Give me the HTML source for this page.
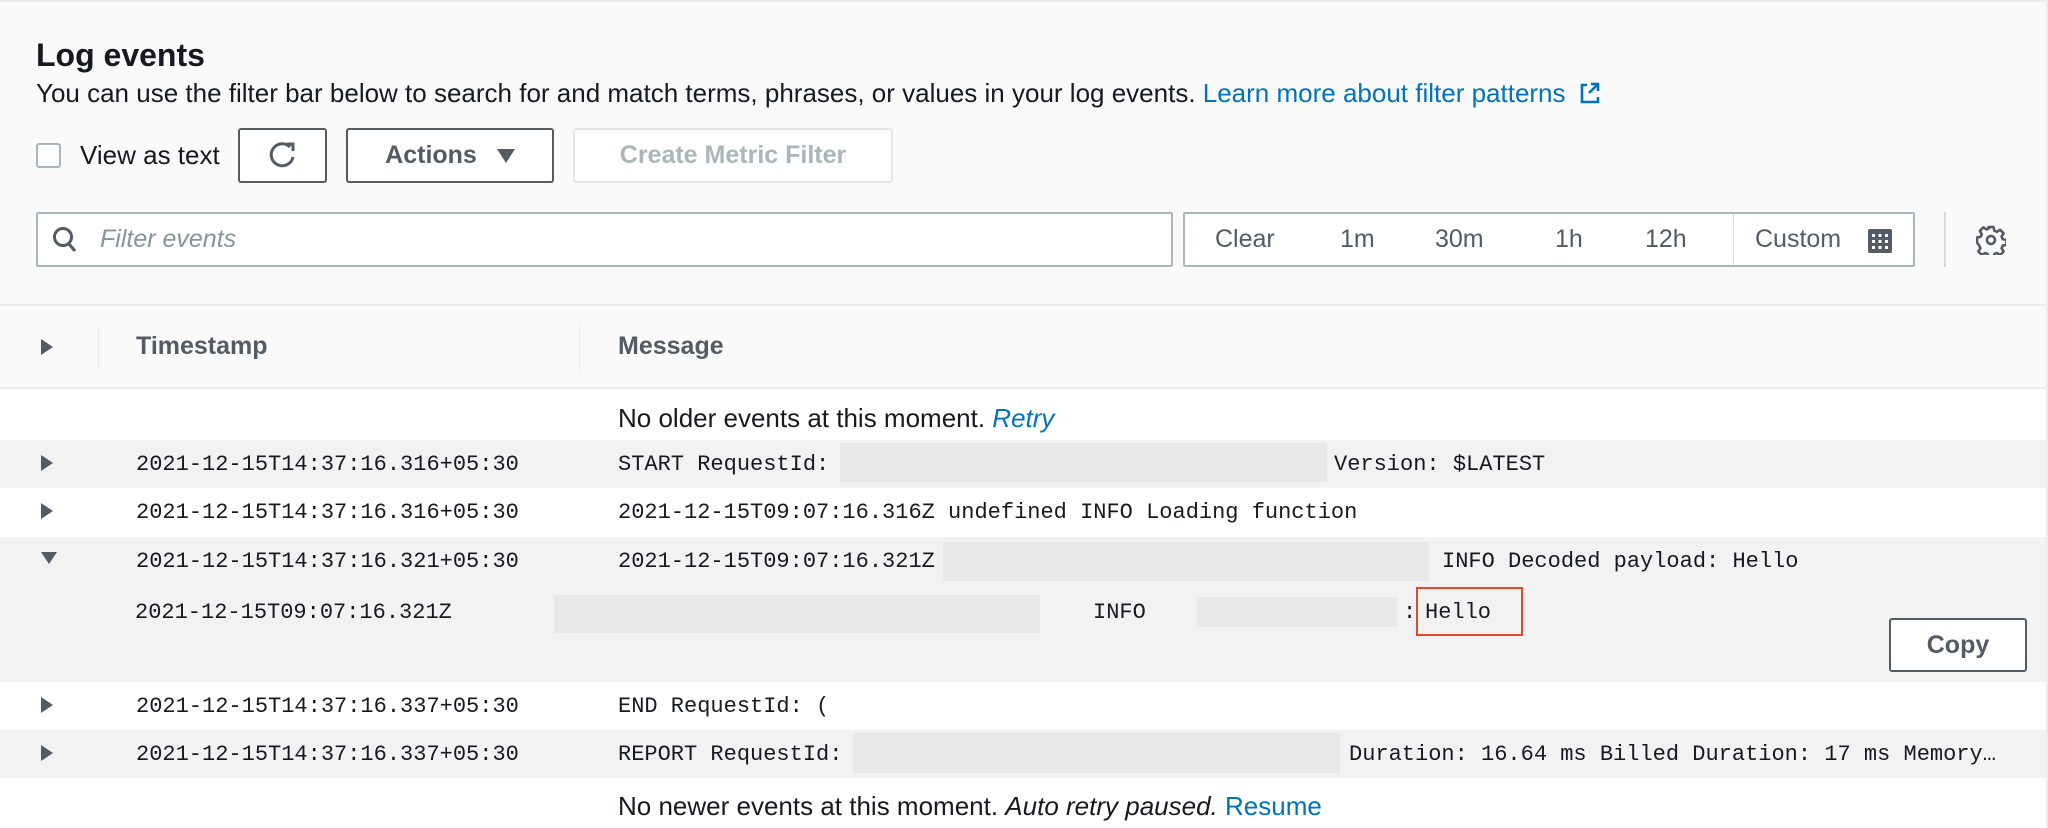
<!DOCTYPE html>
<html><head><meta charset="utf-8"><style>
*{margin:0;padding:0;box-sizing:border-box}
body{width:2048px;height:828px;overflow:hidden;background:#fff;font-family:"Liberation Sans",sans-serif;color:#16191f;position:relative}
.a{position:absolute;white-space:nowrap}
.top{position:absolute;left:0;top:0;width:2048px;height:305px;background:#fafafa;border-top:2px solid #eaeded;border-right:2px solid #eaeded}
.hdr{position:absolute;left:0;top:304px;width:2048px;height:85px;background:#fafafa;border-top:2px solid #eaeded;border-bottom:2px solid #eaeded;border-right:2px solid #eaeded}
.btn{position:absolute;border:2px solid #545b64;border-radius:3px;background:#fff;font-weight:bold;font-size:25px;color:#545b64;display:flex;align-items:center;justify-content:center}
.mono{font-family:"Liberation Mono",monospace;font-size:22px;color:#16191f}
.row{position:absolute;left:0;width:2046px;height:48px}
.sh{background:#f2f2f2}
.red{position:absolute;background:#e8e8e8}
.tri{position:absolute;left:41px;width:0;height:0;border-top:8px solid transparent;border-bottom:8px solid transparent;border-left:12px solid #545b64}
.tg{position:absolute;top:0;height:100%;display:flex;align-items:center;font-size:25px;color:#545b64}
</style></head><body>
<div class="top"></div>
<div class="a" style="left:36px;top:37px;font-size:32px;font-weight:bold">Log events</div>
<div class="a" style="left:36px;top:78px;font-size:26px">You can use the filter bar below to search for and match terms, phrases, or values in your log events. <span style="color:#0073bb">Learn more about filter patterns</span>
<svg width="22" height="24" viewBox="0 0 22 24" style="vertical-align:-3px;margin-left:6px"><path d="M8 4H3v17h16v-5M12 3h7v7M19 3l-9 9" fill="none" stroke="#0073bb" stroke-width="2.6"/></svg></div>
<div class="a" style="left:36px;top:143px;width:25px;height:25px;border:2px solid #aab7b8;border-radius:3px;background:#fff"></div>
<div class="a" style="left:80px;top:140px;font-size:26px">View as text</div>
<div class="btn" style="left:238px;top:128px;width:89px;height:55px"><svg width="30" height="32" viewBox="0 0 30 32"><path d="M22 7A11 11 0 1 0 25 17" fill="none" stroke="#545b64" stroke-width="3"/><path d="M19 4h6v7" fill="none" stroke="#545b64" stroke-width="3"/></svg></div>
<div class="btn" style="left:346px;top:128px;width:208px;height:55px">Actions<span style="display:inline-block;margin-left:20px;border-left:9px solid transparent;border-right:9px solid transparent;border-top:14px solid #545b64"></span></div>
<div class="btn" style="left:573px;top:128px;width:320px;height:55px;border-color:#e4e7e7;color:#aab7b8">Create Metric Filter</div>
<div class="a" style="left:36px;top:212px;width:1137px;height:55px;border:2px solid #aab7b8;border-radius:2px;background:#fff"></div>
<svg class="a" style="left:52px;top:226px" width="26" height="28" viewBox="0 0 26 28"><circle cx="11" cy="11" r="8.5" fill="none" stroke="#545b64" stroke-width="3"/><path d="M17 18l6 7" stroke="#545b64" stroke-width="3.2"/></svg>
<div class="a" style="left:100px;top:225px;font-size:25px;font-style:italic;color:#879596">Filter events</div>
<div class="a" style="left:1183px;top:212px;width:732px;height:55px;border:2px solid #aab7b8;border-radius:2px;background:#fff">
<div class="tg" style="left:30px">Clear</div>
<div class="tg" style="left:155px">1m</div>
<div class="tg" style="left:250px">30m</div>
<div class="tg" style="left:370px">1h</div>
<div class="tg" style="left:460px">12h</div>
<div style="position:absolute;left:548px;top:0;height:100%;border-left:1px solid #d5dbdb"></div>
<div class="tg" style="left:570px">Custom</div>
<svg style="position:absolute;left:683px;top:15px" width="24" height="24" viewBox="0 0 24 24"><rect x="0" y="0" width="24" height="24" rx="2" fill="#545b64"/><g fill="#fff"><rect x="4" y="5" width="3" height="3"/><rect x="10.5" y="5" width="3" height="3"/><rect x="17" y="5" width="3" height="3"/><rect x="4" y="11" width="3" height="3"/><rect x="10.5" y="11" width="3" height="3"/><rect x="17" y="11" width="3" height="3"/><rect x="4" y="17" width="3" height="3"/><rect x="10.5" y="17" width="3" height="3"/><rect x="17" y="17" width="3" height="3"/></g></svg>
</div>
<div class="a" style="left:1944px;top:212px;height:55px;border-left:2px solid #d5dbdb"></div>
<svg class="a" style="left:1976px;top:225px" width="30" height="30" viewBox="0 0 30 30"><path d="M12.5 2h5l.8 3.7 2.6 1.1 3.2-2 3.5 3.5-2 3.2 1.1 2.6 3.7.8v5l-3.7.8-1.1 2.6 2 3.2-3.5 3.5-3.2-2-2.6 1.1-.8 3.7h-5l-.8-3.7-2.6-1.1-3.2 2-3.5-3.5 2-3.2-1.1-2.6L1 17.5v-5l3.7-.8 1.1-2.6-2-3.2 3.5-3.5 3.2 2 2.6-1.1z" fill="none" stroke="#545b64" stroke-width="2.6" stroke-linejoin="round"/><circle cx="15" cy="15" r="4" fill="none" stroke="#545b64" stroke-width="2.6"/></svg>

<div class="hdr"></div>
<div class="tri" style="top:339px"></div>
<div class="a" style="left:98px;top:326px;height:44px;border-left:1px solid #eaeded"></div>
<div class="a" style="left:579px;top:326px;height:44px;border-left:1px solid #eaeded"></div>
<div class="a" style="left:136px;top:332px;font-size:25px;font-weight:bold;color:#545b64">Timestamp</div>
<div class="a" style="left:618px;top:332px;font-size:25px;font-weight:bold;color:#545b64">Message</div>

<div class="a" style="left:618px;top:403px;font-size:26px">No older events at this moment. <i style="color:#0073bb">Retry</i></div>

<div class="row sh" style="top:440px"></div>
<div class="tri" style="top:455px"></div>
<div class="a mono" style="left:136px;top:452px">2021-12-15T14:37:16.316+05:30</div>
<div class="a mono" style="left:618px;top:452px">START RequestId:</div>
<div class="red" style="left:840px;top:443px;width:487px;height:39px"></div>
<div class="a mono" style="left:1334px;top:452px">Version: $LATEST</div>

<div class="tri" style="top:503px"></div>
<div class="a mono" style="left:136px;top:500px">2021-12-15T14:37:16.316+05:30</div>
<div class="a mono" style="left:618px;top:500px">2021-12-15T09:07:16.316Z undefined INFO Loading function</div>

<div class="row sh" style="top:537px;height:145px"></div>
<div class="a" style="left:41px;top:552px;border-left:8px solid transparent;border-right:8px solid transparent;border-top:12px solid #545b64"></div>
<div class="a mono" style="left:136px;top:549px">2021-12-15T14:37:16.321+05:30</div>
<div class="a mono" style="left:618px;top:549px">2021-12-15T09:07:16.321Z</div>
<div class="red" style="left:943px;top:542px;width:486px;height:39px"></div>
<div class="a mono" style="left:1442px;top:549px">INFO Decoded payload: Hello</div>
<div class="a mono" style="left:135px;top:600px">2021-12-15T09:07:16.321Z</div>
<div class="red" style="left:554px;top:595px;width:486px;height:38px"></div>
<div class="a mono" style="left:1093px;top:600px">INFO</div>
<div class="red" style="left:1197px;top:597px;width:200px;height:30px"></div>
<div class="a mono" style="left:1403px;top:600px">:</div>
<div class="a" style="left:1416px;top:587px;width:107px;height:49px;border:2px solid #e8472f"></div>
<div class="a mono" style="left:1425px;top:600px">Hello</div>
<div class="btn" style="left:1889px;top:618px;width:138px;height:54px;color:#545b64">Copy</div>

<div class="tri" style="top:697px"></div>
<div class="a mono" style="left:136px;top:694px">2021-12-15T14:37:16.337+05:30</div>
<div class="a mono" style="left:618px;top:694px">END RequestId: (</div>

<div class="row sh" style="top:730px"></div>
<div class="tri" style="top:745px"></div>
<div class="a mono" style="left:136px;top:742px">2021-12-15T14:37:16.337+05:30</div>
<div class="a mono" style="left:618px;top:742px">REPORT RequestId:</div>
<div class="red" style="left:853px;top:733px;width:487px;height:40px"></div>
<div class="a mono" style="left:1349px;top:742px">Duration: 16.64 ms Billed Duration: 17 ms Memory…</div>

<div class="a" style="left:618px;top:791px;font-size:26px">No newer events at this moment. <i>Auto retry paused.</i> <span style="color:#0073bb">Resume</span></div>
<div class="a" style="left:2046px;top:0;height:828px;border-left:2px solid #eaeded"></div>
</body></html>
